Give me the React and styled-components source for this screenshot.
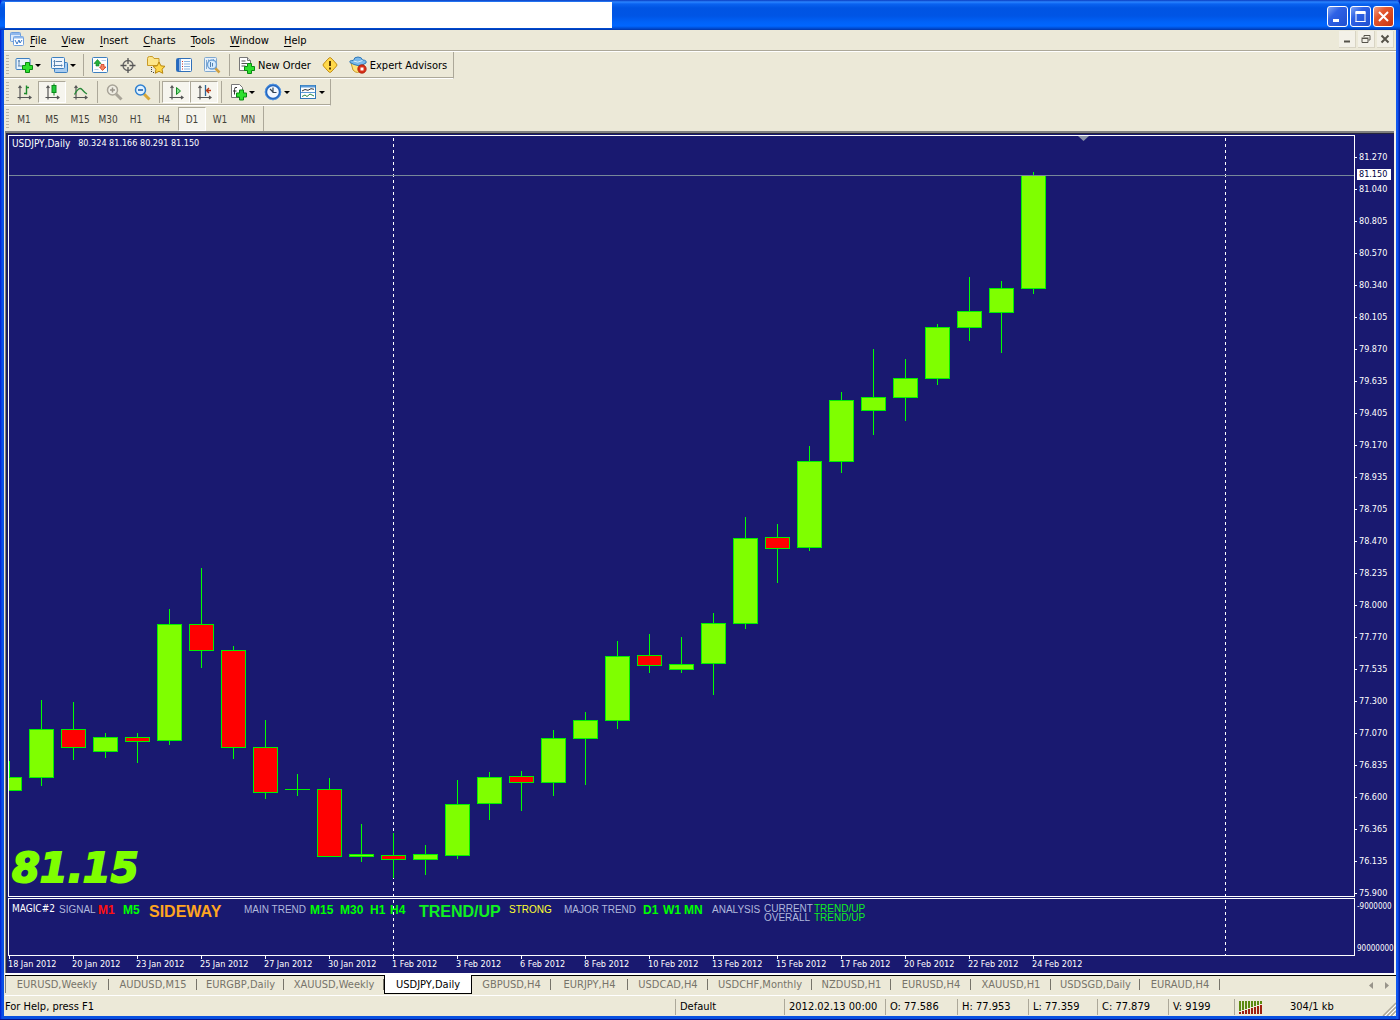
import React from "react";
import styled, { createGlobalStyle, css } from "styled-components";

const ui = '"DejaVu Sans Condensed", "Noto Sans", sans-serif';
const label = '"Liberation Sans", Arial, sans-serif';
const face = "#ece9d8";
const navy = "#191970";

const Global = createGlobalStyle`
  *, *::before, *::after { box-sizing: border-box; }
  body { margin: 0; background: #0a246a; font-family: ${ui}; font-size: 11px; }
  button { font: inherit; color: inherit; border: 0; padding: 0; margin: 0; background: none; }
  ul, ol, p, h1 { margin: 0; padding: 0; list-style: none; font: inherit; }
  svg { display: block; }
`;

const Frame = styled.div`
  min-height: 100vh;
  display: flex;
  flex-direction: column;
  padding: 0 4px 3px;
  background: linear-gradient(90deg, #0019cf 0, #0a4ee8 2px, #0850e0 4px, #0850e0 calc(100% - 4px), #1660ff calc(100% - 3px), #0019a0 100%);
  border-bottom: 1px solid #00138c;
`;

const TitleBar = styled.header`
  height: 30px;
  margin: 0 -4px;
  padding: 2px 6px 2px 5px;
  display: flex;
  justify-content: space-between;
  background: linear-gradient(180deg, #0a3bc0 0, #2a84ff 2px, #0a62f0 4px, #0054e3 8px, #0055e5 16px, #0062f8 22px, #0066ff 26px, #0044c4 29px, #0033a8 30px);
  border-radius: 6px 6px 0 0;
`;

const TitleBlank = styled.div`
  flex: 0 1 607px;
  height: 26px;
  background: #fff;
`;

const TitleButtons = styled.div`
  display: flex;
  gap: 2px;
  padding-top: 4px;
`;

const CaptionButton = styled.button`
  width: 21px;
  height: 21px;
  display: grid;
  place-items: center;
  border: 1px solid #fff;
  border-radius: 3px;
  background: ${(p) =>
    p.$close
      ? "linear-gradient(135deg, #f0a088 0, #e4572e 35%, #c8330f 100%)"
      : "linear-gradient(135deg, #7fa4f4 0, #2f62e6 35%, #1f4fd0 100%)"};
`;

const Client = styled.div`
  flex: 1;
  display: flex;
  flex-direction: column;
  background: ${face};
  color: #000;
`;

const MenuBar = styled.nav`
  height: 22px;
  display: flex;
  align-items: flex-start;
  padding: 0 2px 0 4px;
  border-bottom: 1px solid #fff;
  box-shadow: inset 0 -1px 0 #aca899;
`;

const AppMark = styled.span`
  width: 18px;
  height: 18px;
  display: grid;
  place-items: center;
`;

const MenuButton = styled.button`
  height: 21px;
  padding: 0 8px 0 7px;
  line-height: 21px;
  &:first-of-type { padding-left: 4px; }
  u { text-underline-offset: 2px; }
`;

const MdiButtons = styled.div`
  display: flex;
  gap: 2px;
  margin-left: auto;
  padding-top: 1px;
`;

const MdiButton = styled.button`
  width: 17px;
  height: 17px;
  display: grid;
  place-items: center;
  background: #f3f1e8;
  border-right: 1px solid #d8d4c4;
  border-bottom: 1px solid #d8d4c4;
`;

const Toolbar = styled.div`
  width: fit-content;
  height: ${(p) => (p.$last ? 25 : 27)}px;
  padding: ${(p) => (p.$last ? "1px 1px 0 6px" : "2px 1px 2px 6px")};
  display: flex;
  align-items: stretch;
  border-right: 1px solid #aca899;
  ${(p) =>
    !p.$last &&
    css`
      border-bottom: 1px solid #fff;
      box-shadow: inset 0 -1px 0 #aca899;
    `}
  background: repeating-linear-gradient(180deg, #b8b4a4 0 1px, transparent 1px 3px) 2px 3px / 3px 19px no-repeat;
`;

const Tool = styled.button`
  width: ${(p) => p.$w || 28}px;
  display: flex;
  align-items: center;
  justify-content: center;
  gap: ${(p) => (p.$text ? 3 : 2)}px;
  white-space: nowrap;
  ${(p) =>
    p.$on &&
    css`
      background: #f6f5ee;
      border: 1px solid #fff;
      border-top-color: #aca899;
      border-left-color: #aca899;
    `}
`;

const PeriodTool = styled(Tool)`
  font-size: 10px;
  color: #45433a;
`;

const Sep = styled.span`
  width: 6px;
  background: linear-gradient(#aca899, #aca899) 3px 0 / 1px 100% no-repeat;
`;

const Caret = styled.span`
  border: 3px solid transparent;
  border-top-color: #000;
  border-bottom: 0;
`;

const Workspace = styled.main`
  flex: 1;
  display: grid;
  grid-template-columns: minmax(0, 1fr) 39px;
  grid-template-rows: minmax(0, 1fr) 58px 16px;
  row-gap: 1px;
  margin: 0 2px 0 1px;
  padding: 2px 0 0 2px;
  background: ${navy};
  border-top: 2px solid #808080;
  border-left: 1px solid #808080;
  box-shadow: 2px 0 0 #f4f2e8, inset 1px 1px 0 #26263c;
  overflow: hidden;
  color: #fff;
  font-size: 9px;
`;

const Pane = styled.section`
  position: relative;
  min-height: 0;
  overflow: hidden;
  border: 1px solid #fff;
`;

const Plot = styled.svg`
  position: absolute;
  inset: 0;
  width: 100%;
  height: 100%;
  overflow: hidden;
`;

const Quote = styled.p`
  position: absolute;
  top: 0;
  left: 3px;
  display: flex;
  align-items: center;
  gap: 8px;
  height: 14px;
`;

const Symbol = styled.span`
  font-size: 10px;
`;

const BigPrice = styled.p`
  position: absolute;
  left: 3px;
  bottom: 8px;
  color: #7fff00;
  font: italic bold 40px/40px "DejaVu Sans", sans-serif;
  -webkit-text-stroke: 2px #7fff00;
`;

const Scale = styled.aside`
  position: relative;
  min-height: 0;
`;

const PriceList = styled.ol`
  display: flex;
  flex-direction: column;
  gap: 22px;
  padding-top: 17px;
  margin-bottom: -10px;
`;

const Price = styled.li`
  display: flex;
  align-items: center;
  gap: 2px;
  height: 10px;
  line-height: 10px;
  &::before { content: ""; width: 2px; height: 1px; background: #fff; }
`;

const LastPrice = styled.output`
  position: absolute;
  top: 34px;
  left: 2px;
  width: 34px;
  height: 11px;
  padding-left: 2px;
  line-height: 11px;
  background: #fff;
  color: #000040;
`;

const RangeScale = styled(Scale)`
  display: flex;
  flex-direction: column;
  justify-content: space-between;
  padding: 4px 0 2px 2px;
  font-size: 8px;
  line-height: 10px;
`;

const Signals = styled.div`
  position: absolute;
  top: 4px;
  left: 3px;
  display: grid;
  grid-template-columns: 47px 39px 25px 26px 95px 66px 30px 30px 20px 29px 90px 55px 79px 20px 21px 28px 52px 50px 60px;
  line-height: 14px;
  white-space: nowrap;
`;

const Signal = styled.span`
  color: ${(p) => p.$c || "#b0b8dc"};
  font: ${(p) => (p.$size ? "bold" : "normal")} ${(p) => p.$size || 10}px/14px ${label};
`;

const BigSignal = styled(Signal)`
  line-height: 18px;
`;

const SignalName = styled.span`
  font-size: 10px;
  line-height: 12px;
`;

const Stack = styled(Signal)`
  line-height: 9px;
  padding-top: 1px;
`;

const DateList = styled.ol`
  display: flex;
  grid-column: 1 / -1;
  line-height: 12px;
  margin-top: -1px;
`;

const DateItem = styled.li`
  flex: 0 0 64px;
  padding-top: 2px;
  background: linear-gradient(#fff, #fff) 1px 0 / 1px 3px no-repeat;
  white-space: nowrap;
`;

const TabBar = styled.div`
  height: 23px;
  display: flex;
  align-items: flex-start;
  border-bottom: 1px solid #fff;
  border-top: 2px solid #fff;
  margin-left: 1px;
  padding-right: 7px;
  background: linear-gradient(#000, #000) 0 0 / 100% 1px no-repeat, linear-gradient(#808080, #808080) 0 0 / 1px 18px no-repeat;
  color: #77746a;
`;

const Tab = styled.button`
  flex: 0 0 auto;
  height: 19px;
  line-height: 18px;
  color: #77746a;
  background: linear-gradient(#77746a, #77746a) 100% 4px / 1px 11px no-repeat;
  width: ${(p) => p.$w}px;
  text-align: center;
  white-space: nowrap;
  ${(p) =>
    p.$active &&
    css`
      background: #fff;
      color: #000;
      line-height: 17px;
      border: 1px solid #000;
      border-width: 0 1px 1px;
    `}
`;

const TabScroll = styled.div`
  display: flex;
  gap: 12px;
  margin-left: auto;
  padding-top: 7px;
`;

const StatusBar = styled.footer`
  height: 20px;
  display: flex;
  align-items: stretch;
  line-height: 22px;
`;

const StatusHelp = styled.span`
  flex: 1;
  padding-left: 1px;
`;

const StatusCell = styled.span`
  flex: 0 0 ${(p) => p.$w}px;
  padding-left: 5px;
  white-space: nowrap;
  background: linear-gradient(#aca899, #aca899) 0 3px / 1px 16px no-repeat;
`;

const Traffic = styled(StatusCell)`
  display: flex;
  align-items: flex-start;
  gap: 27px;
`;

const TrafficBars = styled.svg`
  margin-top: 5px;
`;

const Grip = styled.svg`
  margin: auto 0 0 auto;
`;

/* Toolbar drawings */
const Icon = ({ children, size = 18, ...rest }) => (
  <svg width={size} height={size} viewBox={`0 0 ${size} ${size}`} aria-hidden="true" {...rest}>
    {children}
  </svg>
);

const Plus = ({ x, y }) => (
  <path
    d={`M${x + 3} ${y}h4v3h3v4h-3v3h-4v-3h-3v-4h3z`}
    fill="#2fe02f"
    stroke="#0a8a12"
    strokeWidth="1"
  />
);

const WindowsIcon = () => (
  <Icon size={16}>
    <rect x="1.500" y="1.500" width="10" height="9" rx="1" fill="#dbe9fb" stroke="#6f9fdc" />
    <path d="M2 3h9" stroke="#8fb8ec" strokeWidth="2" />
    <rect x="4.500" y="5.500" width="10" height="9" rx="1" fill="#fff" stroke="#6f9fdc" />
    <path d="M5 6.500h9" stroke="#8fb8ec" strokeWidth="2" />
    <path d="M6 9l2 4 2-4 1 3 2-3" fill="none" stroke="#3a78c8" />
  </Icon>
);

const NewChartIcon = () => (
  <Icon>
    <rect x="1" y="2.500" width="14" height="11" rx="1" fill="#e8f2fc" stroke="#3c7fc0" />
    <path d="M3 5h2M4 4v6M3 10h9M11 9v2" stroke="#5a84b0" fill="none" />
    <Plus x={7.5} y={6.5} />
  </Icon>
);

const ProfilesIcon = () => (
  <Icon>
    <rect x="4.500" y="6.500" width="13" height="10" rx="1" fill="#a8ccf0" stroke="#3c7fc0" />
    <rect x="1.500" y="1.500" width="13" height="11" rx="1" fill="#eff6fe" stroke="#3c7fc0" />
    <path d="M4.500 4v7M3.500 5.500h2M3.500 9.500h9M11.500 8.500v2M6 5.500h6" stroke="#5a84b0" fill="none" />
  </Icon>
);

const MarketIcon = () => (
  <Icon>
    <rect x="1.500" y="1.500" width="15" height="15" rx="1" fill="#fdfeff" stroke="#3c7fc0" />
    <path d="M6.500 3.500l3.500 4H8v2.500H5V7.500H3z" fill="#22b03a" stroke="#0d7d22" strokeWidth=".6" />
    <path d="M11.500 14.500l-3-3.500H10V8.500h3V11h2z" fill="#f58460" stroke="#d23b1a" strokeWidth=".8" />
    <path d="M10.500 4.500h4.500M3.500 13.500h4" stroke="#b8d0e8" />
  </Icon>
);

const CrosshairIcon = () => (
  <Icon>
    <circle cx="9" cy="9.500" r="5" fill="none" stroke="#666" strokeWidth="1.300" />
    <path d="M9 2v6M9 11v6M1.500 9.500h6M10.500 9.500h6" stroke="#555" strokeWidth="1.300" />
  </Icon>
);

const NavigatorIcon = () => (
  <Icon size={20}>
    <path d="M1.500 3.500q0-2 2-2h3l1.500 2h5v7h-11.500z" fill="#fde68a" stroke="#c89a28" />
    <path d="M5.500 12v6M7 17.500h3" stroke="#444" strokeDasharray="1 1" fill="none" />
    <path d="M13 7l1.900 3.800 4.100.5-3 2.900.8 4.100-3.800-2-3.700 2 .7-4.100-3-2.900 4.200-.5z" fill="#ffd84a" stroke="#b8860b" />
  </Icon>
);

const DataIcon = () => (
  <Icon>
    <rect x="1.500" y="2.500" width="15" height="13" rx="1" fill="#fafdff" stroke="#2f6fb8" />
    <path d="M2 3h2.500v12H2z" fill="#2468c0" />
    <path d="M5.500 3v12" stroke="#7fb0e8" />
    <path d="M7 5.500h1M7 8h1M7 10.500h1M7 13h1" stroke="#c03030" />
    <path d="M9 5.500h6M9 8h6M9 10.500h6M9 13h6" stroke="#8ab4e0" />
  </Icon>
);

const TesterIcon = () => (
  <Icon>
    <rect x="1.500" y="1.500" width="12" height="14" rx="1" fill="#e8f1fa" stroke="#7fa8d0" />
    <path d="M3.500 4v9M5.500 3.500v4M10.500 3v3" stroke="#7fa8d0" />
    <path d="M12 12l4.500 4.500" stroke="#d0a040" strokeWidth="2.500" />
    <circle cx="9" cy="8.500" r="4.500" fill="#d4ebff" fillOpacity=".9" stroke="#6da0d4" strokeWidth="1.300" />
    <path d="M7.500 6v5M9.500 7v3.500" stroke="#5080b0" />
  </Icon>
);

const OrderIcon = () => (
  <Icon>
    <path d="M2.500 1.500h8l3 3v10h-11z" fill="#fff" stroke="#777" />
    <path d="M10.500 1.500v3h3" fill="#ddd" stroke="#777" />
    <path d="M4.500 5h4M4.500 7.500h6M4.500 10h4" stroke="#555" />
    <Plus x={7.5} y={7.5} />
  </Icon>
);

const WarnIcon = () => (
  <Icon>
    <path d="M9 1.500q1 0 6.500 6.500 1 1 0 2-5.500 6.500-6.500 6.500T2.500 10q-1-1 0-2Q8 1.500 9 1.500z" fill="#ffd94a" stroke="#c08a10" />
    <path d="M9 5v5M9 11.500v2" stroke="#5a3a00" strokeWidth="2" />
  </Icon>
);

const ExpertIcon = () => (
  <Icon>
    <path d="M2 7h13l-2 7q-4.500 5-9 0z" fill="#ffe27a" stroke="#c89a28" />
    <path d="M1 6.500Q0 4 4.500 4.500 5 .8 9 1t4.500 3Q18 4 17 7q-4 3-8 2.500T1 6.500z" fill="#7ab8ea" stroke="#2f78b8" />
    <path d="M4.500 5q4 2.500 9-.5" fill="none" stroke="#d8eefc" />
    <circle cx="13" cy="13" r="4.200" fill="#d8301a" stroke="#a81a08" strokeWidth=".8" />
    <rect x="11.500" y="11.500" width="3" height="3" fill="#fff" />
  </Icon>
);

const Axes = () => (
  <path d="M5 3.500v13M2.500 14.500h13M3.500 5L5 3l1.500 2M14 13l2 1.500-2 1.500" fill="none" stroke="#555" strokeWidth="1.200" />
);

const BarsIcon = () => (
  <Icon>
    <Axes />
    <path d="M11.500 2.500v9M9 10.500h2.500M11.500 4.500H14" stroke="#1c8a2a" strokeWidth="1.400" fill="none" />
  </Icon>
);

const CandlesIcon = () => (
  <Icon>
    <Axes />
    <path d="M11 .5v12" stroke="#0c8a1c" />
    <rect x="9" y="2.500" width="4" height="7" fill="#20c83a" stroke="#0c8a1c" />
  </Icon>
);

const LineIcon = () => (
  <Icon>
    <Axes />
    <path d="M3.500 11.500Q8 3 11 6.500t5 4.500" fill="none" stroke="#2a8a3a" strokeWidth="1.300" />
  </Icon>
);

const ZoomIcon = ({ off, minus }) => (
  <Icon>
    <path d="M11 11l5.500 5.500" stroke={off ? "#a8a498" : "#d8a838"} strokeWidth="3" />
    <circle cx="7.500" cy="7" r="5" fill={off ? "#f0eee4" : "#e0f2ff"} stroke={off ? "#a8a498" : "#2f80d0"} strokeWidth="1.500" />
    <path d={minus ? "M5 7h5" : "M5 7h5M7.500 4.500v5"} stroke={off ? "#98948a" : "#1858a8"} strokeWidth="1.500" />
  </Icon>
);

const ScrollIcon = () => (
  <Icon>
    <Axes />
    <path d="M9.500 4.500v7l4-3.500z" fill="#7fe08a" stroke="#128a22" />
  </Icon>
);

const ShiftIcon = () => (
  <Icon>
    <Axes />
    <path d="M10.500 2v11" stroke="#2a6898" strokeWidth="1.300" />
    <path d="M16 7.500h-4M14 5l-2.500 2.500L14 10" stroke="#b83a18" strokeWidth="1.400" fill="none" />
  </Icon>
);

const IndicatorIcon = () => (
  <Icon>
    <path d="M2.500 1.500h8l3 3v10h-11z" fill="#fff" stroke="#777" />
    <path d="M8 4.500q-2.500-1-2.500 2v5M4 8h3.500" stroke="#333" fill="none" />
    <Plus x={7.5} y={7} />
  </Icon>
);

const ClockIcon = () => (
  <Icon>
    <circle cx="9" cy="9" r="7" fill="#f2f8ff" stroke="#2468c0" strokeWidth="2.400" />
    <circle cx="9" cy="9" r="7.800" fill="none" stroke="#66a8f0" strokeWidth=".7" />
    <path d="M9 4.500V9.500h3.500M6 6l3 3" stroke="#345" strokeWidth="1.200" fill="none" />
  </Icon>
);

const TemplateIcon = () => (
  <Icon>
    <rect x="1.500" y="2.500" width="15" height="13" fill="#fff" stroke="#2f78b8" />
    <path d="M2 3.500h14" stroke="#5a9ad8" strokeWidth="2" />
    <path d="M2 9.500h14" stroke="#5a9ad8" />
    <path d="M3 8l3-1.500 3 .8 3-1.600 3 .6" fill="none" stroke="#333" />
    <path d="M3 13.500l3-1.500 2 1.500 3-2.500 4 2" fill="none" stroke="#2a8a4a" />
  </Icon>
);

/* [centre x, high, body top, body bottom, low, falling] */
const candles = [
  [9, 761, 777, 791, 791, 0],
  [41, 700, 729, 778, 786, 0],
  [73, 702, 729, 748, 760, 1],
  [105, 733, 737, 752, 758, 0],
  [137, 733, 737, 742, 763, 1],
  [169, 609, 624, 741, 745, 0],
  [201, 568, 624, 651, 668, 1],
  [233, 646, 650, 748, 759, 1],
  [265, 720, 747, 793, 799, 1],
  [297, 774, 789, 790, 796, 0],
  [329, 778, 789, 857, 857, 1],
  [361, 824, 854, 857, 862, 0],
  [393, 833, 855, 860, 878, 1],
  [425, 845, 854, 860, 875, 0],
  [457, 780, 804, 856, 859, 0],
  [489, 772, 777, 804, 820, 0],
  [521, 771, 776, 783, 811, 1],
  [553, 730, 738, 783, 796, 0],
  [585, 712, 720, 739, 785, 0],
  [617, 641, 656, 721, 729, 0],
  [649, 634, 655, 666, 673, 1],
  [681, 637, 664, 670, 673, 0],
  [713, 613, 623, 664, 695, 0],
  [745, 517, 538, 624, 629, 0],
  [777, 524, 537, 549, 583, 1],
  [809, 446, 461, 548, 551, 0],
  [841, 392, 400, 462, 473, 0],
  [873, 349, 397, 411, 435, 0],
  [905, 359, 378, 398, 421, 0],
  [937, 324, 327, 379, 385, 0],
  [969, 277, 311, 328, 341, 0],
  [1001, 281, 288, 313, 353, 0],
  [1033, 172, 175, 289, 294, 0],
];

const Candle = ({ data: [x, high, top, bottom, low, falling] }) => (
  <g shapeRendering="crispEdges">
    <rect x={x} y={high} width="1" height={low - high} fill="#00ff00" />
    <rect x={x - 12} y={top} width="25" height={bottom - top} fill="#00f000" />
    {bottom - top > 2 && (
      <rect x={x - 11} y={top + 1} width="23" height={bottom - top - 2} fill={falling ? "#ff0000" : "#7fff00"} />
    )}
  </g>
);

const Periods = ({ y1, y2 }) => (
  <g stroke="#fff" strokeDasharray="3 3" shapeRendering="crispEdges">
    <path d={`M393.500 ${y1}V${y2}`} />
    <path d={`M1225.500 ${y1}V${y2}`} />
  </g>
);

const prices = [
  "81.270", "81.040", "80.805", "80.570", "80.340", "80.105", "79.870", "79.635",
  "79.405", "79.170", "78.935", "78.705", "78.470", "78.235", "78.000", "77.770",
  "77.535", "77.300", "77.070", "76.835", "76.600", "76.365", "76.135", "75.900",
];

const dates = [
  "18 Jan 2012", "20 Jan 2012", "23 Jan 2012", "25 Jan 2012", "27 Jan 2012", "30 Jan 2012",
  "1 Feb 2012", "3 Feb 2012", "6 Feb 2012", "8 Feb 2012", "10 Feb 2012", "13 Feb 2012",
  "15 Feb 2012", "17 Feb 2012", "20 Feb 2012", "22 Feb 2012", "24 Feb 2012",
];

const tabs = [
  ["EURUSD,Weekly", 104], ["AUDUSD,M15", 88], ["EURGBP,Daily", 87], ["XAUUSD,Weekly", 100],
  ["USDJPY,Daily", 88], ["GBPUSD,H4", 79], ["EURJPY,H4", 77], ["USDCAD,H4", 80],
  ["USDCHF,Monthly", 104], ["NZDUSD,H1", 79], ["EURUSD,H4", 80], ["XAUUSD,H1", 80],
  ["USDSGD,Daily", 89], ["EURAUD,H4", 80],
];

const menus = ["File", "View", "Insert", "Charts", "Tools", "Window", "Help"];
const periods = ["M1", "M5", "M15", "M30", "H1", "H4", "D1", "W1", "MN"];

const green = "#00ff00";

export default function App() {
  return (
    <>
      <Global />
      <Frame>
        <TitleBar>
          <TitleBlank />
          <TitleButtons>
            <CaptionButton aria-label="Minimize">
              <svg width="15" height="15"><path d="M3 11.500h6" stroke="#fff" strokeWidth="3" /></svg>
            </CaptionButton>
            <CaptionButton aria-label="Maximize">
              <svg width="15" height="15"><path d="M3 3h9M3 3v10M12 3v10M2.500 12.500h10" stroke="#fff" /><path d="M2.500 3.500h10" stroke="#fff" strokeWidth="3" /></svg>
            </CaptionButton>
            <CaptionButton $close aria-label="Close">
              <svg width="15" height="15"><path d="M3 3l9 9M12 3l-9 9" stroke="#fff" strokeWidth="2" /></svg>
            </CaptionButton>
          </TitleButtons>
        </TitleBar>

        <Client>
          <MenuBar>
            <AppMark><WindowsIcon /></AppMark>
            {menus.map((m) => (
              <MenuButton key={m}><u>{m[0]}</u>{m.slice(1)}</MenuButton>
            ))}
            <MdiButtons>
              <MdiButton aria-label="Minimize chart">
                <svg width="10" height="10"><path d="M2 7.500h6" stroke="#55534a" strokeWidth="2" /></svg>
              </MdiButton>
              <MdiButton aria-label="Restore chart">
                <svg width="10" height="10"><path d="M3 3V1.500h6V6H7.500M3 1.500h6" fill="none" stroke="#55534a" /><path d="M1 4.500h6v4H1z" fill="none" stroke="#55534a" /><path d="M.5 4h7" stroke="#55534a" /></svg>
              </MdiButton>
              <MdiButton aria-label="Close chart">
                <svg width="10" height="10"><path d="M1.500 1.500l7 7M8.500 1.500l-7 7" stroke="#55534a" strokeWidth="2" /></svg>
              </MdiButton>
            </MdiButtons>
          </MenuBar>

          <Toolbar role="toolbar" aria-label="Standard">
            <Tool $w={35} aria-label="New chart"><NewChartIcon /><Caret /></Tool>
            <Tool $w={35} aria-label="Profiles"><ProfilesIcon /><Caret /></Tool>
            <Sep />
            <Tool aria-label="Market watch"><MarketIcon /></Tool>
            <Tool aria-label="Crosshair"><CrosshairIcon /></Tool>
            <Tool aria-label="Navigator"><NavigatorIcon /></Tool>
            <Tool aria-label="Data window"><DataIcon /></Tool>
            <Tool aria-label="Strategy tester"><TesterIcon /></Tool>
            <Sep />
            <Tool $w={84} $text><OrderIcon />New Order</Tool>
            <Tool aria-label="Alerts"><WarnIcon /></Tool>
            <Tool $w={108} $text><ExpertIcon />Expert Advisors</Tool>
          </Toolbar>

          <Toolbar role="toolbar" aria-label="Charts">
            <Tool aria-label="Bar chart"><BarsIcon /></Tool>
            <Tool $on aria-label="Candlesticks"><CandlesIcon /></Tool>
            <Tool aria-label="Line chart"><LineIcon /></Tool>
            <Sep />
            <Tool aria-label="Zoom in"><ZoomIcon off /></Tool>
            <Tool aria-label="Zoom out"><ZoomIcon minus /></Tool>
            <Sep />
            <Tool $on aria-label="Auto scroll"><ScrollIcon /></Tool>
            <Tool $on aria-label="Chart shift"><ShiftIcon /></Tool>
            <Sep />
            <Tool $w={35} aria-label="Indicators"><IndicatorIcon /><Caret /></Tool>
            <Tool $w={35} aria-label="Period"><ClockIcon /><Caret /></Tool>
            <Tool $w={35} aria-label="Templates"><TemplateIcon /><Caret /></Tool>
          </Toolbar>

          <Toolbar $last role="toolbar" aria-label="Timeframes">
            {periods.map((p) => (
              <PeriodTool key={p} $on={p === "D1"}>{p}</PeriodTool>
            ))}
          </Toolbar>

          <Workspace>
            <Pane>
              <Plot>
                <g transform="translate(-9 -136)">
                  <Periods y1={138} y2={900} />
                  <path d="M1078 136h11l-5.500 5z" fill="#8a93a8" />
                  {candles.map((c) => (
                    <Candle key={c[0]} data={c} />
                  ))}
                </g>
                <path d="M0 39.500H4000" stroke="#778899" shapeRendering="crispEdges" />
              </Plot>
              <Quote><Symbol>USDJPY,Daily</Symbol>80.324 81.166 80.291 81.150</Quote>
              <BigPrice>81.15</BigPrice>
            </Pane>
            <Scale>
              <PriceList>
                {prices.map((p) => (
                  <Price key={p}>{p}</Price>
                ))}
              </PriceList>
              <LastPrice>81.150</LastPrice>
            </Scale>

            <Pane>
              <Plot>
                <g transform="translate(-9 -899)">
                  <Periods y1={900} y2={960} />
                </g>
              </Plot>
              <Signals>
                <SignalName>MAGIC#2</SignalName>
                <Signal>SIGNAL</Signal>
                <Signal $size={12} $c="#ff1010">M1</Signal>
                <Signal $size={12} $c={green}>M5</Signal>
                <BigSignal $size={16} $c="#ffa520">SIDEWAY</BigSignal>
                <Signal>MAIN TREND</Signal>
                <Signal $size={12} $c={green}>M15</Signal>
                <Signal $size={12} $c={green}>M30</Signal>
                <Signal $size={12} $c={green}>H1</Signal>
                <Signal $size={12} $c={green}>H4</Signal>
                <BigSignal $size={16} $c="#10f020">TREND/UP</BigSignal>
                <Signal $c="#ffff30">STRONG</Signal>
                <Signal>MAJOR TREND</Signal>
                <Signal $size={12} $c={green}>D1</Signal>
                <Signal $size={12} $c={green}>W1</Signal>
                <Signal $size={12} $c={green}>MN</Signal>
                <Signal>ANALYSIS</Signal>
                <Stack>CURRENT<br />OVERALL</Stack>
                <Stack $c="#10f020">TREND/UP<br />TREND/UP</Stack>
              </Signals>
            </Pane>
            <RangeScale>
              <span>-9000000</span>
              <span>90000000</span>
            </RangeScale>

            <DateList>
              {dates.map((d) => (
                <DateItem key={d}>{d}</DateItem>
              ))}
            </DateList>
          </Workspace>

          <TabBar>
            {tabs.map(([name, w]) => (
              <Tab key={name} $w={w} $active={name === "USDJPY,Daily"}>{name}</Tab>
            ))}
            <TabScroll>
              <button aria-label="Previous tabs">
                <svg width="4" height="7"><path d="M4 0v7L0 3.500z" fill="#98948a" /></svg>
              </button>
              <button aria-label="Next tabs">
                <svg width="4" height="7"><path d="M0 0v7l4-3.500z" fill="#98948a" /></svg>
              </button>
            </TabScroll>
          </TabBar>

          <StatusBar>
            <StatusHelp>For Help, press F1</StatusHelp>
            <StatusCell $w={109}>Default</StatusCell>
            <StatusCell $w={101}>2012.02.13 00:00</StatusCell>
            <StatusCell $w={72}>O: 77.586</StatusCell>
            <StatusCell $w={71}>H: 77.953</StatusCell>
            <StatusCell $w={69}>L: 77.359</StatusCell>
            <StatusCell $w={71}>C: 77.879</StatusCell>
            <StatusCell $w={66}>V: 9199</StatusCell>
            <Traffic $w={162}>
              <TrafficBars width="24" height="13" shapeRendering="crispEdges" aria-hidden="true">
                {[0, 1, 2, 3, 4, 5, 6, 7].map((i) => (
                  <g key={i}>
                    <rect x={i * 3} y="0" width="2" height={10 - i} fill="#5c8a10" />
                    <rect x={i * 3} y={11 - i} width="2" height={2 + i} fill="#a02010" />
                  </g>
                ))}
              </TrafficBars>
              304/1 kb
              <Grip width="14" height="14" aria-hidden="true">
                <path d="M1 14L14 1M5 14l9-9M9 14l5-5" stroke="#aca899" strokeWidth="1.500" />
                <path d="M3 14L14 3M7 14l7-7M11 14l3-3" stroke="#fff" />
              </Grip>
            </Traffic>
          </StatusBar>
        </Client>
      </Frame>
    </>
  );
}
